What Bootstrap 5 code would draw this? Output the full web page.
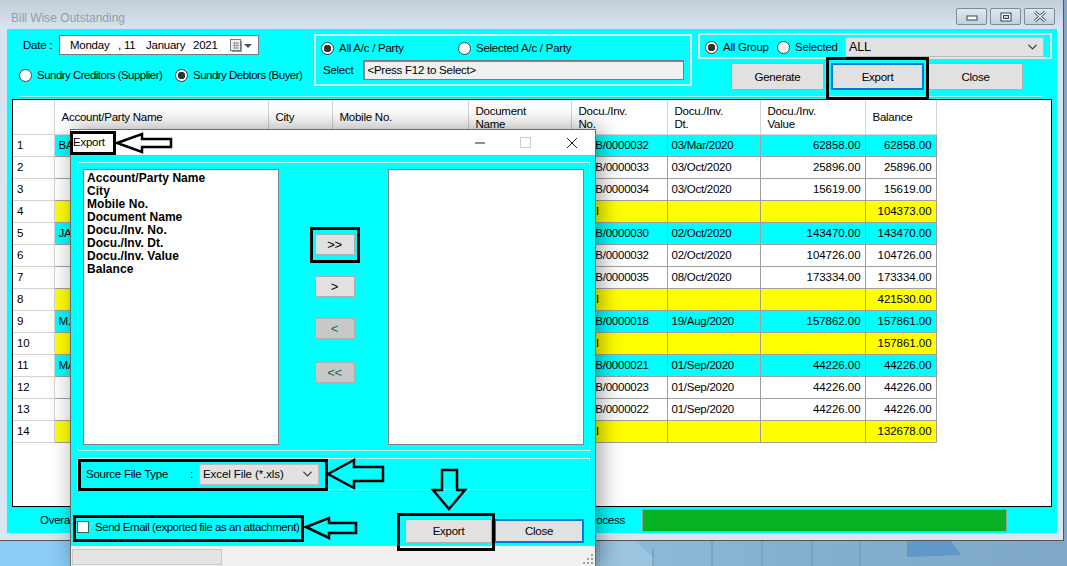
<!DOCTYPE html>
<html lang="en">
<head>
<meta charset="utf-8">
<title>Bill Wise Outstanding</title>
<link href="https://cdn.jsdelivr.net/npm/bootstrap@5.3.0/dist/css/bootstrap.min.css" rel="stylesheet">
<style>
html,body{height:100%}
body{margin:0;overflow:hidden;position:relative;width:1067px;height:566px;background:linear-gradient(90deg,#8bcbf5 0,#8bcbf5 70px,#8fbcd9 600px,#84b0cd 800px,#7ea8c6 1067px);font-family:"Liberation Sans",Arial,sans-serif;font-size:11.5px;letter-spacing:-.25px;color:#000;line-height:14px}
.deskart{position:absolute;left:0;top:0}
.mainwin{position:absolute;left:0;top:0;width:1064px;height:541px;background:linear-gradient(180deg,#c3cdd8 0,#d8e4f1 29px,#dbe6f3 100%);border-right:1px solid #555;border-bottom:1px solid #555}
.wintitle{height:29px;padding-left:11px;padding-top:11px;color:#979ca1;font-size:12px;letter-spacing:0}
.winctl{width:31px;height:17px;border:1px solid #7d8a99;border-radius:2px;background:linear-gradient(180deg,#dfe8f2,#c3d0de);margin-top:-3px}
.winctl svg{display:block;margin:auto}
.cyanarea{position:absolute;left:7px;top:29px;width:1050px;height:504px;background:#0ff}
.toprow{height:67px}
.leftcol{width:307px}
.datelbl{margin:9px 0 0 16px;width:36px;white-space:nowrap}
.datepick{width:200px;height:20px;margin-top:6px;background:#fff;border:1px solid #7a7a7a;padding-left:10px;white-space:nowrap}
.dpa{width:48px}.dpb{width:28px}.dpc{width:47px}
.radiorow{margin:13px 0 0 12px;white-space:nowrap}
.radiorow .rtext{letter-spacing:-.52px}
.form-check-input.wradio{width:13px;height:13px;margin:0;border:1px solid #444;background-color:#fff;flex:none}
.form-check-input.wradio:checked{background-color:#fff;border-color:#333;background-image:radial-gradient(circle,#333 0,#333 3.5px,transparent 4px)}
.rtext{padding-left:5px;white-space:nowrap}
.grpbox{border:2px solid #d8e8e8}
.midgroup{width:378px;height:52px;margin-top:5px;padding:2px 5px}
.rightcol{width:354px;margin-left:6px;margin-top:4px}
.rightgroup{height:26px;padding:2px 5px 0 5px}
.inputbox{flex:1;height:20px;background:#f0f0f0;border:1px solid #7a7a7a;box-shadow:inset 1px 1px 0 #888;padding:2px 3px;margin-left:10px;margin-right:1px;white-space:nowrap}
.selwrap.form-select{height:20px;padding:0 20px 0 3px;font-size:12.5px;line-height:18px;letter-spacing:-.1px;background-color:#e1e1e1;border:1px solid #bbb;border-radius:0;color:#000;background-position:right 4px center;background-size:13px 10px;font-family:"Liberation Sans",Arial,sans-serif}
.grpcombo.form-select{width:199px;flex:none}
.wbtn.btn{background:#e1e1e1;border:1px solid #adadad;border-radius:0;font-size:11.5px;letter-spacing:-.25px;color:#000;padding:0;line-height:14px;display:flex;align-items:center;justify-content:center}
.wbtn.btn.bluebtn{border:2px solid #0078d7}
.btnrow{margin-top:4px;padding-left:33px}
.topb1{width:93px;height:27px}
.topb2{width:93px;height:27px;margin-left:7px}
.topb3{width:95px;height:27px;margin-left:4px}
.thinrule{height:2px;margin:0 15px 0 12px;background:#a8e8e8;border-bottom:1px solid #7fb0b0}
.gridbox{margin:1px 0 0 5px;width:1040px;height:408px;background:#fff;border:1px solid #000;overflow:hidden}
.dgrid.table{width:923px;table-layout:fixed;margin:0;border-collapse:collapse;border-color:#a0a0a0}
.dgrid.table>:not(caption)>*>*{padding:0 4px;height:22px;border:1px solid #a0a0a0;font-weight:400;font-size:11.5px;line-height:13px;vertical-align:middle;color:#000;white-space:nowrap}
.dgrid.table>thead>tr>th{height:34px;background:#fff;padding:2px 7px 0;border-color:#d4d4d4;border-top:0;white-space:normal}
.dgrid.table>tbody>tr>th{background:#fff;border-color:#d4d4d4;border-left:0}
.dgrid.table>thead>tr>th:first-child{border-left:0}
.dgrid.table>tbody>tr>td.text-end{letter-spacing:-.05px}
.dgrid.table>tbody>tr>td.docno{padding-left:9px}
.rowcy{--bs-table-bg:#0ff}
.rowye{--bs-table-bg:#ff0}
.footrow{height:26px;padding-left:33px}
.greenbar{width:365px;height:23px;background:#08b024;border:1px solid #a0a0a0;margin:0 50px 0 17px}
.dlg{position:absolute;left:70px;top:129px;width:526px;height:437px;background:#0ff;border:1px solid #6a6a6a;border-bottom:0;box-shadow:4px 0 22px rgba(0,0,0,.4);z-index:2}
.dlgtitle{height:25px;background:#fff;padding-left:2px}
.dlgtitletxt{margin-bottom:2px}
.dlgctl{width:46px}
.dlgctl svg{display:block;margin:auto}
.dlggroup{margin:7px 5px 0 6px;height:289px;padding:6px 5px 0 5px;border:1px solid #d8e8e8;box-shadow:inset 0 0 0 1px #0ff}
.lbox{width:196px;height:276px;background:#fff;border:1px solid #828282}
.lbold{font-weight:700;font-size:12px;line-height:13px;padding:2px 3px;letter-spacing:.05px}
.midbtns{width:109px;padding-top:65px;padding-left:2px}
.arrowbtn{width:40px;height:21px}
.arrowbtn.btn{font-size:13px;font-weight:400}
.arrowoff.btn{background:#c8c8c8;color:#0b6a73}
.gap21{margin-top:21px}
.gap23{margin-top:23px}
.srcgroup{margin:7px 5px 0 6px;height:32px;border:1px solid #d8e8e8;padding-left:8px;white-space:nowrap}
.srcsel.form-select{width:120px;height:21px;margin-left:6px;font-size:11.5px;letter-spacing:-.1px;padding-left:3px}
.colonlbl{margin-left:22px}
.lowrow{height:24px;margin-top:29px;padding-left:6px}
.form-check-input.chkbox{width:12px;height:12px;margin:0 6px 8px 0;border-radius:0;border-color:#555;flex:none}
.mailtxt{margin-bottom:8px;letter-spacing:-.45px;white-space:nowrap}
.expbtn{width:87px;height:24px;margin-left:auto}
.closebtn{width:90px;height:24px;margin:0 11px 0 2px}
.dlgstatus{position:absolute;left:0;right:0;bottom:0;height:20px;background:#f0f0f0;padding:3px 0 0 1px}
.dlgcell{width:150px;height:16px;background:#e4e4e4;border:1px solid #c8c8c8}
.gripper{position:absolute;right:1px;bottom:1px}
.overlaybox{position:absolute;border:3px solid #000;z-index:3;pointer-events:none}
.ob1{left:70px;top:131px;width:46px;height:24px}
.ob2{left:826px;top:57px;width:103px;height:43px}
.ob3{left:310px;top:227px;width:50px;height:36px}
.ob4{left:78px;top:459px;width:250px;height:32px}
.ob5{left:73px;top:515px;width:231px;height:27px}
.ob6{left:397px;top:513px;width:98px;height:38px}
.arrowlayer{position:absolute;left:0;top:0;z-index:3;pointer-events:none}
</style>
</head>
<body>
<svg class="deskart" width="1067" height="566" fill="none">
  <path d="M600 541h35l18 16v9h-53z" fill="#9bc5e0"/>
  <path d="M653 548v18M712 541v25M762 541v25M812 541v25M860 541v25" stroke="#6f9bbb" stroke-width="2" opacity=".6"/>
  <path d="M907 541h44l10 14-54 2z" fill="#6098c8"/>
</svg>
<div class="mainwin">
  <div class="wintitle d-flex">
    <span>Bill Wise Outstanding</span>
    <div class="d-flex ms-auto" style="margin-right:8px;gap:3px">
      <div class="winctl d-flex align-items-center"><svg width="12" height="8"><rect x="1" y="3" width="10" height="4" fill="#fff" stroke="#36424f"/></svg></div>
      <div class="winctl d-flex align-items-center"><svg width="12" height="10"><rect x="1" y="1" width="10" height="8" fill="#fff" stroke="#36424f"/><rect x="3.5" y="3.5" width="5" height="3" fill="#c9d4e0" stroke="#36424f"/></svg></div>
      <div class="winctl d-flex align-items-center"><svg width="14" height="11"><path d="M2 1 12 10M12 1 2 10" stroke="#36424f" stroke-width="3"/><path d="M2 1 12 10M12 1 2 10" stroke="#fff" stroke-width="1.3"/></svg></div>
    </div>
  </div>
  <div class="cyanarea">
    <div class="toprow d-flex">
      <div class="leftcol">
        <div class="d-flex">
          <div class="datelbl">Date :</div>
          <div class="datepick d-flex align-items-center">
            <span class="dpa">Monday</span><span class="dpb">, 11</span><span class="dpc">January</span><span>2021</span>
            <svg class="ms-auto" width="24" height="15" style="margin-right:4px"><rect x="2" y="3" width="10" height="11" fill="#999"/><rect x=".5" y="1.5" width="10" height="11" fill="#eee" stroke="#777"/><path d="M3 5h6M3 7.5h6M3 10h6M4.5 4v7M7 4v7" stroke="#9a9a9a"/><path d="M14 6h8l-4 4z" fill="#44536b"/></svg>
          </div>
        </div>
        <div class="radiorow d-flex align-items-center">
          <input class="form-check-input wradio" type="radio" name="ledg">
          <span class="rtext" style="width:143px">Sundry Creditors (Supplier)</span>
          <input class="form-check-input wradio" type="radio" name="ledg" checked>
          <span class="rtext">Sundry Debtors (Buyer)</span>
        </div>
      </div>
      <div class="midgroup grpbox">
        <div class="d-flex align-items-center" style="height:20px">
          <input class="form-check-input wradio" type="radio" name="acc" checked>
          <span class="rtext" style="width:124px">All A/c / Party</span>
          <input class="form-check-input wradio" type="radio" name="acc">
          <span class="rtext">Selected A/c / Party</span>
        </div>
        <div class="d-flex align-items-center" style="margin-top:2px;padding-left:2px">
          <span>Select</span>
          <div class="inputbox">&lt;Press F12 to Select&gt;</div>
        </div>
      </div>
      <div class="rightcol">
        <div class="rightgroup grpbox d-flex align-items-center">
          <input class="form-check-input wradio" type="radio" name="grp" checked>
          <span class="rtext" style="width:59px;flex:none">All Group</span>
          <input class="form-check-input wradio" type="radio" name="grp">
          <span class="rtext" style="width:55px;flex:none">Selected</span>
          <select class="selwrap grpcombo form-select"><option>ALL</option></select>
        </div>
        <div class="btnrow d-flex">
          <button class="wbtn btn topb1" type="button">Generate</button>
          <button class="wbtn btn bluebtn topb2" type="button">Export</button>
          <button class="wbtn btn topb3" type="button">Close</button>
        </div>
      </div>
    </div>
    <div class="thinrule"></div>
    <div class="gridbox">
      <table class="dgrid table">
        <colgroup><col style="width:41px"><col style="width:214px"><col style="width:64px"><col style="width:136px"><col style="width:103px"><col style="width:96px"><col style="width:93px"><col style="width:105px"><col style="width:71px"></colgroup>
        <thead><tr><th></th><th>Account/Party Name</th><th>City</th><th>Mobile No.</th><th>Document<br>Name</th><th>Docu./Inv.<br>No.</th><th>Docu./Inv.<br>Dt.</th><th>Docu./Inv.<br>Value</th><th>Balance</th></tr></thead>
        <tbody>
          <tr class="rowcy"><th>1</th><td>BA</td><td></td><td></td><td></td><td class="docno">SAB/0000032</td><td>03/Mar/2020</td><td class="text-end">62858.00</td><td class="text-end">62858.00</td></tr>
          <tr><th>2</th><td></td><td></td><td></td><td></td><td class="docno">SAB/0000033</td><td>03/Oct/2020</td><td class="text-end">25896.00</td><td class="text-end">25896.00</td></tr>
          <tr><th>3</th><td></td><td></td><td></td><td></td><td class="docno">SAB/0000034</td><td>03/Oct/2020</td><td class="text-end">15619.00</td><td class="text-end">15619.00</td></tr>
          <tr class="rowye"><th>4</th><td></td><td></td><td></td><td></td><td>Total</td><td></td><td></td><td class="text-end">104373.00</td></tr>
          <tr class="rowcy"><th>5</th><td>JA</td><td></td><td></td><td></td><td class="docno">SAB/0000030</td><td>02/Oct/2020</td><td class="text-end">143470.00</td><td class="text-end">143470.00</td></tr>
          <tr><th>6</th><td></td><td></td><td></td><td></td><td class="docno">SAB/0000032</td><td>02/Oct/2020</td><td class="text-end">104726.00</td><td class="text-end">104726.00</td></tr>
          <tr><th>7</th><td></td><td></td><td></td><td></td><td class="docno">SAB/0000035</td><td>08/Oct/2020</td><td class="text-end">173334.00</td><td class="text-end">173334.00</td></tr>
          <tr class="rowye"><th>8</th><td></td><td></td><td></td><td></td><td>Total</td><td></td><td></td><td class="text-end">421530.00</td></tr>
          <tr class="rowcy"><th>9</th><td>M.</td><td></td><td></td><td></td><td class="docno">SAB/0000018</td><td>19/Aug/2020</td><td class="text-end">157862.00</td><td class="text-end">157861.00</td></tr>
          <tr class="rowye"><th>10</th><td></td><td></td><td></td><td></td><td>Total</td><td></td><td></td><td class="text-end">157861.00</td></tr>
          <tr class="rowcy"><th>11</th><td>MA</td><td></td><td></td><td></td><td class="docno">SAB/0000021</td><td>01/Sep/2020</td><td class="text-end">44226.00</td><td class="text-end">44226.00</td></tr>
          <tr><th>12</th><td></td><td></td><td></td><td></td><td class="docno">SAB/0000023</td><td>01/Sep/2020</td><td class="text-end">44226.00</td><td class="text-end">44226.00</td></tr>
          <tr><th>13</th><td></td><td></td><td></td><td></td><td class="docno">SAB/0000022</td><td>01/Sep/2020</td><td class="text-end">44226.00</td><td class="text-end">44226.00</td></tr>
          <tr class="rowye"><th>14</th><td></td><td></td><td></td><td></td><td>Total</td><td></td><td></td><td class="text-end">132678.00</td></tr>
        </tbody>
      </table>
    </div>
    <div class="footrow d-flex align-items-center">
      <span>Overall</span>
      <span class="ms-auto">Process</span>
      <div class="greenbar"></div>
    </div>
  </div>
</div>

<div class="dlg">
  <div class="dlgtitle d-flex align-items-center">
    <span class="dlgtitletxt">Export</span>
    <div class="d-flex ms-auto align-self-stretch">
      <div class="dlgctl d-flex"><svg width="12" height="12"><path d="M1 6h10" stroke="#222"/></svg></div>
      <div class="dlgctl d-flex"><svg width="12" height="12"><rect x=".5" y=".5" width="10" height="10" fill="none" stroke="#ccc"/></svg></div>
      <div class="dlgctl d-flex"><svg width="12" height="12"><path d="M1 1l10 10M11 1 1 11" stroke="#222"/></svg></div>
    </div>
  </div>
  <div class="dlggroup d-flex">
    <div class="lbox lbold">Account/Party Name<br>City<br>Mobile No.<br>Document Name<br>Docu./Inv. No.<br>Docu./Inv. Dt.<br>Docu./Inv. Value<br>Balance</div>
    <div class="midbtns d-flex flex-column align-items-center">
      <button class="wbtn btn arrowbtn" type="button">&gt;&gt;</button>
      <button class="wbtn btn arrowbtn gap21" type="button">&gt;</button>
      <button class="wbtn btn arrowbtn arrowoff gap21" type="button">&lt;</button>
      <button class="wbtn btn arrowbtn arrowoff gap23" type="button">&lt;&lt;</button>
    </div>
    <div class="lbox"></div>
  </div>
  <div class="srcgroup d-flex align-items-center">
    <span>Source File Type</span>
    <span class="colonlbl">:</span>
    <select class="selwrap srcsel form-select"><option>Excel File (*.xls)</option></select>
  </div>
  <div class="lowrow d-flex align-items-center">
    <input class="form-check-input chkbox" type="checkbox">
    <span class="mailtxt">Send Email (exported file as an attachment)</span>
    <button class="wbtn btn expbtn" type="button">Export</button>
    <button class="wbtn btn bluebtn closebtn" type="button">Close</button>
  </div>
  <div class="dlgstatus">
    <div class="dlgcell"></div>
    <svg class="gripper" width="12" height="12"><g fill="#a0a0a0"><rect x="9" y="1" width="2" height="2"/><rect x="5" y="5" width="2" height="2"/><rect x="9" y="5" width="2" height="2"/><rect x="1" y="9" width="2" height="2"/><rect x="5" y="9" width="2" height="2"/><rect x="9" y="9" width="2" height="2"/></g></svg>
  </div>
</div>

<div class="overlaybox ob1"></div>
<div class="overlaybox ob2"></div>
<div class="overlaybox ob3"></div>
<div class="overlaybox ob4"></div>
<div class="overlaybox ob5"></div>
<div class="overlaybox ob6"></div>
<svg class="arrowlayer" width="1067" height="566" fill="none" stroke="#000" stroke-width="2.5" stroke-linejoin="miter">
  <path d="M117 143 142 134V139H171V147H142V152Z"/>
  <path d="M328 474 354 460V467H383V481H354V488Z"/>
  <path d="M306 527 329 518V523H356V533H329V538Z"/>
  <path d="M442 470H457V490H465L449 509 433 490H442Z"/>
</svg>
<script src="https://cdn.jsdelivr.net/npm/bootstrap@5.3.0/dist/js/bootstrap.bundle.min.js"></script>
</body>
</html>
